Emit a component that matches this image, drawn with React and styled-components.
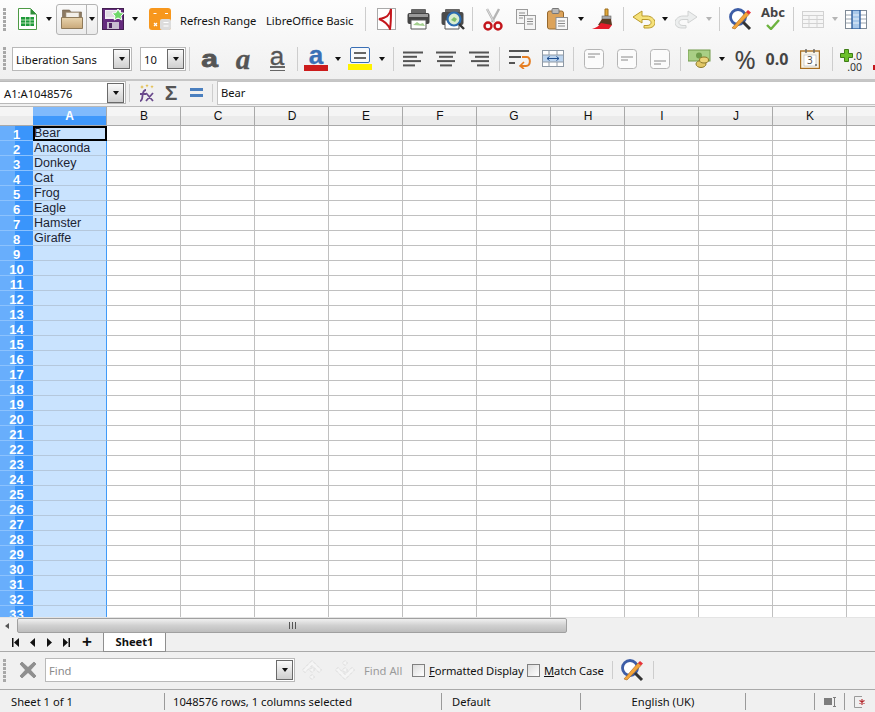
import React from 'react'
import styled, { createGlobalStyle } from 'styled-components'

const COLS = ['B', 'C', 'D', 'E', 'F', 'G', 'H', 'I', 'J', 'K']
const ANIMALS = ['Bear', 'Anaconda', 'Donkey', 'Cat', 'Frog', 'Eagle', 'Hamster', 'Giraffe']
const ROWS = Array.from({ length: 33 }, (_, i) => i + 1)

/* toolbar icons */
const NewSheetIcon = () => (
    <svg width="19" height="22" viewBox="0 0 19 22">
        <path d="M.5.5h12l6 6v15H.5z" fill="#fff" stroke="#4d9a45" />
        <path d="M12.500.5l6 6h-6z" fill="#2f8f3a" />
        <rect x="3" y="9" width="13" height="9" fill="#1f9a3b" />
        <path d="M3 12h13M3 15h13M7.500 9v9M12 9v9" stroke="#d9f2d0" strokeWidth=".8" />
    </svg>
)
const FolderIcon = () => (
    <svg width="22" height="20" viewBox="0 0 22 20">
        <defs>
            <linearGradient id="folderFront" x1="0" y1="0" x2="0" y2="1">
                <stop offset="0" stopColor="#e8d4ae" />
                <stop offset="1" stopColor="#c9a97a" />
            </linearGradient>
        </defs>
        <path d="M1.500 1h7l1.500 2h10.500v7h-19z" fill="#8d7a62" stroke="#6f5f4a" strokeWidth=".6" />
        <rect x="5" y="3.500" width="13" height="6" fill="#f3f0ea" stroke="#a99a80" strokeWidth=".6" />
        <path d="M.5 8.500h21v11H.5z" fill="url(#folderFront)" stroke="#8f7a59" />
    </svg>
)
const SaveIcon = () => (
    <svg width="23" height="22" viewBox="0 0 23 22">
        <rect x=".5" y=".5" width="21" height="21" fill="#652b7e" stroke="#43204f" />
        <rect x="3" y="2" width="16" height="9" fill="#f1eef2" />
        <path d="M4 4h13M4 6h13M4 8h13" stroke="#c4bacb" strokeWidth=".7" />
        <rect x="5" y="14" width="12" height="7" fill="#c9bcd0" />
        <rect x="7" y="15" width="3" height="5" fill="#4e2461" />
        <path d="M16 1l2 3.600 4 .6-3 2.800.8 4-3.800-2-3.800 2 .8-4-3-2.800 4-.6z" fill="#6fd86a" stroke="#fff" strokeWidth="1" />
    </svg>
)
const MacroIcon = () => (
    <svg width="22" height="22" viewBox="0 0 22 22">
        <rect width="22" height="22" rx="3" fill="#f7971d" />
        <rect x="11" y="11" width="11" height="11" rx="2" fill="#dcdcdc" />
        <path d="M4.500 5.500h3M16 5.500h3M14.500 14.500h5M14.500 18h5" stroke="#fff" strokeWidth="1.200" />
        <path d="M5 15l3 3M8 15l-3 3" stroke="#fff" strokeWidth="1.200" />
    </svg>
)
const PdfIcon = () => (
    <svg width="19" height="22" viewBox="0 0 19 22">
        <rect x=".5" y=".5" width="18" height="21" fill="#fff" stroke="#a9a9a9" />
        <path d="M14 1C13 7 10 10 2 11c5 2 9 5 11 10 1-6 1-13 1-20z" fill="none" stroke="#c4161c" strokeWidth="2" />
    </svg>
)
const PrintIcon = () => (
    <svg width="23" height="22" viewBox="0 0 23 22">
        <rect x="4" y="1" width="15" height="5" rx="1" fill="#666" />
        <rect x=".5" y="5" width="22" height="11" rx="2" fill="#444" />
        <rect x="2" y="6" width="19" height="3" fill="#9a9a9a" />
        <path d="M4 12h15v9H4z" fill="#fff" stroke="#555" />
        <path d="M6 17l4-3 3 2 3-1 2 3z" fill="#a3cf8e" />
    </svg>
)
const PreviewIcon = () => (
    <svg width="24" height="22" viewBox="0 0 24 22">
        <rect x="4" y="1" width="15" height="5" rx="1" fill="#666" />
        <rect x=".5" y="4" width="22" height="13" rx="2" fill="#4b4b4b" />
        <path d="M4 12h14v9H4z" fill="#fff" stroke="#555" />
        <circle cx="13" cy="11" r="6.500" fill="#d9ecd0" stroke="#2b6cb0" strokeWidth="2.200" />
        <path d="M10 12l3-3 3 2-2 3z" fill="#7fbf6a" />
        <path d="M18 16l5 5" stroke="#333" strokeWidth="2.400" />
    </svg>
)
const ScissorsIcon = () => (
    <svg width="20" height="23" viewBox="0 0 20 23">
        <path d="M4 1l7 13M16 1L9 14" stroke="#b4b4b4" strokeWidth="2.400" />
        <path d="M4 1l7 13" stroke="#e4e4e4" strokeWidth=".8" />
        <circle cx="5" cy="18" r="3.500" fill="none" stroke="#c3161c" strokeWidth="2.400" />
        <circle cx="15" cy="18" r="3.500" fill="none" stroke="#c3161c" strokeWidth="2.400" />
    </svg>
)
const CopyIcon = () => (
    <svg width="20" height="21" viewBox="0 0 20 21">
        <rect x=".5" y=".5" width="11" height="14" fill="#f4f4f4" stroke="#9b9b9b" />
        <rect x="8.500" y="6.500" width="11" height="14" fill="#f4f4f4" stroke="#9b9b9b" />
        <path d="M3 4h6M3 6.500h6M3 9h4M11 10h6M11 12.500h6M11 15h6" stroke="#8a8a8a" />
    </svg>
)
const PasteIcon = () => (
    <svg width="21" height="22" viewBox="0 0 21 22">
        <rect x=".5" y="3" width="16" height="18" rx="2" fill="#dca35a" stroke="#96682c" />
        <rect x="5" y=".5" width="7" height="5" rx="1" fill="#b9b9b9" stroke="#777" />
        <rect x="9" y="9.500" width="11.500" height="12" fill="#f7f7f7" stroke="#8f8f8f" />
        <path d="M11 13h7M11 15.500h7M11 18h7" stroke="#8a8a8a" />
    </svg>
)
const BrushIcon = () => (
    <svg width="24" height="22" viewBox="0 0 24 22">
        <path d="M13 1h3v7h-3z" fill="#e0a83c" stroke="#9c6d1b" />
        <rect x="10" y="8" width="9" height="3" fill="#aaa" stroke="#666" strokeWidth=".6" />
        <path d="M10 11h9l1 6H6z" fill="#5a3a22" />
        <path d="M0 21c4-1 7-3 9-6l11 2-3 4z" fill="#e51c2a" />
    </svg>
)
const UndoIcon = ({ off }) => (
    <svg width="23" height="19" viewBox="0 0 23 19" style={off ? { transform: 'scaleX(-1)' } : undefined}>
        <path
            d="M10 1L1 7l9 6V9.500h5c3 0 4 1.500 4 3s-1 3-4 3h-3V18h4c4 0 7-2 7-5.500S19 6 15 6h-5z"
            fill={off ? '#eceeee' : '#f6e27a'}
            stroke={off ? '#d0d2d2' : '#b9992b'}
        />
    </svg>
)
const FindIcon = () => (
    <svg width="24" height="24" viewBox="0 0 24 24">
        <circle cx="10" cy="10" r="7.500" fill="#fff" stroke="#3d5da6" strokeWidth="2.800" />
        <path d="M15 15l7 7" stroke="#333" strokeWidth="3" />
        <path d="M4 21L18 5l3 2.500L7 22z" fill="#f4a53a" stroke="#a8651a" strokeWidth=".6" />
        <path d="M18 5l2-2 3 2.500-2 2z" fill="#e6323a" />
    </svg>
)
const SpellIcon = () => (
    <svg width="14" height="11" viewBox="0 0 14 11">
        <path d="M1 6l4 4 8-9" fill="none" stroke="#6db33f" strokeWidth="2.400" />
    </svg>
)
const GridIcon = () => (
    <svg width="22" height="17" viewBox="0 0 22 17">
        <rect x=".5" y=".5" width="21" height="16" fill="#f6f6f6" stroke="#d2d2d2" />
        <path d="M1 4.500h20M1 8.500h20M1 12.500h20M7 4v13M15 4v13" stroke="#d2d2d2" />
    </svg>
)
const ColumnIcon = () => (
    <svg width="22" height="19" viewBox="0 0 22 19">
        <rect x=".5" y=".5" width="21" height="18" fill="#fff" stroke="#7f8a96" />
        <path d="M1 5h20M1 9h20M1 13h20" stroke="#9aa4ae" />
        <rect x="7" y="0" width="8" height="19" fill="#a9c8ea" stroke="#2f5f9f" strokeWidth="1.400" />
        <path d="M8 5h6M8 9h6M8 13h6" stroke="#e6f0fa" />
    </svg>
)
const AlignIcon = ({ mode }) => {
    const spans = {
        left: [[0, 20], [0, 14], [0, 18], [0, 12]],
        center: [[0, 20], [3, 17], [1, 19], [4, 16]],
        right: [[0, 20], [6, 20], [2, 20], [8, 20]],
    }[mode]
    return (
        <svg width="20" height="16" viewBox="0 0 20 16">
            {spans.map(([a, b], i) => (
                <path key={i} d={`M${a} ${1.5 + i * 4.3}H${b}`} stroke="#555" strokeWidth="2" />
            ))}
        </svg>
    )
}
const WrapIcon = () => (
    <svg width="24" height="20" viewBox="0 0 24 20">
        <path d="M1 2h20M1 8h12M1 14h6" stroke="#555" strokeWidth="2" />
        <path d="M14 8h5c4 0 4 9-1 9h-5" fill="none" stroke="#e67e22" strokeWidth="2" />
        <path d="M16 13l-4 4 4 3" fill="none" stroke="#e67e22" strokeWidth="1.600" />
    </svg>
)
const MergeIcon = () => (
    <svg width="22" height="17" viewBox="0 0 22 17">
        <rect x=".5" y=".5" width="21" height="16" fill="#fff" stroke="#8e99a5" />
        <rect x="1" y="5" width="20" height="7" fill="#bcd4ee" />
        <path d="M1 5h20M1 12h20M7 1v4M15 1v4M7 12v4M15 12v4" stroke="#8e99a5" />
        <path d="M5 8.500h12M5 8.500l2.500-2M5 8.500l2.500 2M17 8.500l-2.500-2M17 8.500l-2.500 2" stroke="#1f4e8f" fill="none" />
    </svg>
)
const VAlignIcon = ({ line }) => (
    <svg width="20" height="20" viewBox="0 0 20 20">
        <rect x=".5" y=".5" width="19" height="19" rx="3" fill="#fbfbfb" stroke="#b5b5b5" />
        <path d={`M4 ${line}h12M4 ${line + 3}h7`} stroke="#8a8a8a" />
    </svg>
)
const MoneyIcon = () => (
    <svg width="24" height="19" viewBox="0 0 24 19">
        <rect x="0" y="1" width="22" height="11" fill="#a9cf85" stroke="#739a4d" />
        <circle cx="11" cy="6.500" r="3" fill="#6e9c4a" />
        <ellipse cx="13" cy="15" rx="5" ry="3.500" fill="#e2c766" stroke="#8d7a2a" />
        <ellipse cx="16" cy="11" rx="4.500" ry="3" fill="#ecd47a" stroke="#8d7a2a" />
    </svg>
)
const DateIcon = () => (
    <svg width="20" height="20" viewBox="0 0 20 20">
        <rect x=".5" y="2" width="19" height="17.500" fill="#f7f3e8" stroke="#a96f22" strokeWidth="1.400" />
        <rect x="4" y="6" width="12" height="11" fill="#fff" stroke="#b5b5b5" strokeWidth=".6" />
        <path d="M6 0v4M14 0v4" stroke="#666" strokeWidth="1.400" />
        <rect x="15" y="15" width="2" height="2" fill="#888" />
    </svg>
)
const PlusIcon = () => (
    <svg width="13" height="13" viewBox="0 0 13 13">
        <path d="M4.500.5h4v4h4v4h-4v4h-4v-4h-4v-4h4z" fill="#6cc02a" stroke="#3f7d17" />
    </svg>
)
const FxIcon = () => (
    <svg width="18" height="18" viewBox="0 0 18 18">
        <path d="M5 1l.6 1.500L7 3l-1.400.6L5 5l-.6-1.400L3 3l1.400-.5zM10 0l.5 1.200 1.200.5-1.200.5-.5 1.200-.5-1.200-1.200-.5 1.200-.5zM15 1l.5 1.200 1.200.5-1.200.5-.5 1.200-.5-1.200-1.200-.5 1.200-.5z" fill="#e2b93b" />
        <path d="M3 17c3 0 2-5 3-8s2-3 3-3M3 10h6M9 9l7 8M16 9l-7 8" fill="none" stroke="#6a4a8c" strokeWidth="1.800" />
    </svg>
)
const EqualsIcon = () => (
    <svg width="13" height="9" viewBox="0 0 13 9">
        <rect width="13" height="3" fill="#4a7fbf" />
        <rect y="6" width="13" height="3" fill="#4a7fbf" />
    </svg>
)
const NavIcon = ({ dir }) => (
    <svg width="7" height="9" viewBox="0 0 7 9">
        {dir === 'first' && <path d="M0 0h1.500v9H0zM7 0v9L2 4.500z" fill="#111" />}
        {dir === 'prev' && <path d="M6 0v9L1 4.500z" fill="#111" />}
        {dir === 'next' && <path d="M1 0v9l5-4.500z" fill="#111" />}
        {dir === 'last' && <path d="M0 0v9l5-4.500zM5.500 0H7v9H5.500z" fill="#111" />}
    </svg>
)
const CloseIcon = () => (
    <svg width="18" height="18" viewBox="0 0 18 18">
        <path d="M3 1l6 5.500L15 1l2 2-5.500 6L17 15l-2 2-6-5.500L3 17l-2-2 5.500-6L1 3z" fill="#8f8f8f" stroke="#777" strokeWidth=".6" />
    </svg>
)
const FindStepIcon = ({ up }) => (
    <svg width="20" height="20" viewBox="0 0 20 20" style={up ? undefined : { transform: 'scaleY(-1)' }}>
        <path
            d="M10 .5L19.500 10 17 12.500l-7-7-7 7L.5 10zM10 7.500l2.500 2.500-2.500 2.500L7.500 10zM10 14.500l2.500 2.500-2.500 2.500L7.500 17z"
            fill="#f5f5f5"
            stroke="#cfcfcf"
            strokeDasharray="1 1"
        />
    </svg>
)
const SelectionModeIcon = () => (
    <svg width="12" height="10" viewBox="0 0 12 10">
        <rect y="1" width="8" height="7" fill="#7d7d7d" />
        <path d="M9 .5h3M9 9.500h3M10.500 1v8" stroke="#7d7d7d" />
    </svg>
)
const ModifiedIcon = () => (
    <svg width="12" height="12" viewBox="0 0 12 12">
        <path d="M8 .5H.5v11H8" fill="none" stroke="#9a9a9a" />
        <path d="M8 3v6M5.500 4.500l5 3M10.500 4.500l-5 3" stroke="#b3262a" strokeWidth="1.100" />
    </svg>
)

function ComboArrow() {
    return <ComboButton><Caret /></ComboButton>
}

function App() {
    return (
        <Page>
            <GlobalStyle />
            <TopBar $h={38} $top="#fdfdfd" $bottom="#f7f7f7">
                <Grip />
                <Slot $w={36}><NewSheetIcon /></Slot>
                <Slot $w={8}><Caret /></Slot>
                <OpenButton>
                    <OpenMain><FolderIcon /></OpenMain>
                    <OpenDrop><Caret /></OpenDrop>
                </OpenButton>
                <Slot $w={30}><SaveIcon /></Slot>
                <Slot $w={14}><Caret /></Slot>
                <Slot $w={36}><MacroIcon /></Slot>
                <TextButton $w={86}>Refresh Range</TextButton>
                <TextButton $w={95}>LibreOffice Basic</TextButton>
                <Slot $w={12}><Sep /></Slot>
                <Slot $w={30}><PdfIcon /></Slot>
                <Slot $w={34}><PrintIcon /></Slot>
                <Slot $w={36}><PreviewIcon /></Slot>
                <Slot $w={2}><Sep /></Slot>
                <Slot $w={40}><ScissorsIcon /></Slot>
                <Slot $w={26}><CopyIcon /></Slot>
                <Slot $w={37}><PasteIcon /></Slot>
                <Slot $w={9}><Caret /></Slot>
                <Slot $w={38}><BrushIcon /></Slot>
                <Slot $w={1}><Sep /></Slot>
                <Slot $w={38}><UndoIcon /></Slot>
                <Slot $w={6}><Caret /></Slot>
                <Slot $w={36}><UndoIcon off /></Slot>
                <Slot $w={10}><Caret $off /></Slot>
                <Slot $w={10}><Sep /></Slot>
                <Slot $w={32}><FindIcon /></Slot>
                <Slot $w={34}>
                    <SpellStack>
                        <AbcText>Abc</AbcText>
                        <SpellIcon />
                    </SpellStack>
                </Slot>
                <Slot $w={6}><Sep /></Slot>
                <Slot $w={34}><GridIcon /></Slot>
                <Slot $w={10}><Caret $off /></Slot>
                <Slot $w={32}><ColumnIcon /></Slot>
            </TopBar>

            <TopBar $h={41} $top="#f7f7f7" $bottom="#f0f0f0">
                <Grip />
                <Slot $w={3} />
                <Combo $w={120}>
                    <ComboValue>Liberation Sans</ComboValue>
                    <ComboArrow />
                </Combo>
                <Slot $w={8} />
                <Combo $w={46}>
                    <ComboValue>10</ComboValue>
                    <ComboArrow />
                </Combo>
                <Slot $w={6}><Sep /></Slot>
                <Slot $w={36}><FontGlyph $bold>a</FontGlyph></Slot>
                <Slot $w={30}><FontGlyph $italic>a</FontGlyph></Slot>
                <Slot $w={38}>
                    <ColorStack>
                        <FontGlyph>a</FontGlyph>
                        <DoubleRule />
                    </ColorStack>
                </Slot>
                <Slot $w={2}><Sep /></Slot>
                <Slot $w={36}>
                    <ColorStack>
                        <FontGlyph $blue>a</FontGlyph>
                        <ColorBar $color="#cc1c1c" />
                    </ColorStack>
                </Slot>
                <Slot $w={8}><Caret /></Slot>
                <Slot $w={36}>
                    <ColorStack>
                        <HighlightBox />
                        <ColorBar $color="#fff200" />
                    </ColorStack>
                </Slot>
                <Slot $w={8}><Caret /></Slot>
                <Slot $w={14}><Sep /></Slot>
                <Slot $w={26}><AlignIcon mode="left" /></Slot>
                <Slot $w={40}><AlignIcon mode="center" /></Slot>
                <Slot $w={26}><AlignIcon mode="right" /></Slot>
                <Slot $w={14}><Sep /></Slot>
                <Slot $w={28}><WrapIcon /></Slot>
                <Slot $w={38}><MergeIcon /></Slot>
                <Slot $w={2}><Sep /></Slot>
                <Slot $w={40}><VAlignIcon line={5} /></Slot>
                <Slot $w={26}><VAlignIcon line={8} /></Slot>
                <Slot $w={40}><VAlignIcon line={12} /></Slot>
                <Slot $w={1}><Sep /></Slot>
                <Slot $w={38}><MoneyIcon /></Slot>
                <Slot $w={6}><Caret /></Slot>
                <Slot $w={40}><Percent>%</Percent></Slot>
                <Slot $w={24}><Decimal>0.0</Decimal></Slot>
                <Slot $w={42}>
                    <DateBox>
                        <DateIcon />
                        <DateDigit>3</DateDigit>
                    </DateBox>
                </Slot>
                <Slot $w={2}><Sep /></Slot>
                <DecimalAdd>
                    <PlusIcon />
                    <DecimalDigits>
                        <span>.0</span>
                        <span>.00</span>
                    </DecimalDigits>
                </DecimalAdd>
                <NextIconEdge />
            </TopBar>

            <FormulaBar>
                <NameBox>
                    <ComboValue>A1:A1048576</ComboValue>
                    <ComboArrow />
                </NameBox>
                <Slot $w={7}><Sep $short /></Slot>
                <Slot $w={26}><FxIcon /></Slot>
                <Slot $w={24}><Sigma>Σ</Sigma></Slot>
                <Slot $w={26}><EqualsIcon /></Slot>
                <Slot $w={6}><Sep $short /></Slot>
                <FormulaInput>Bear</FormulaInput>
            </FormulaBar>

            <Sheet>
                <HeaderRow>
                    <Corner />
                    <ColHead $active>A</ColHead>
                    {COLS.map(c => <ColHead key={c}>{c}</ColHead>)}
                    <ColHead $rest />
                </HeaderRow>
                {ROWS.map(n => (
                    <Row key={n}>
                        <RowHead>{n}</RowHead>
                        <CellA $cursor={n === 1}>{ANIMALS[n - 1]}</CellA>
                        {COLS.map(c => <Cell key={c} />)}
                        <Cell $rest />
                    </Row>
                ))}
            </Sheet>

            <ScrollBar>
                <ScrollLeft><ScrollArrow /></ScrollLeft>
                <ScrollThumb><ThumbGrip /></ScrollThumb>
            </ScrollBar>

            <TabBar>
                <TabNav>
                    <NavIcon dir="first" />
                    <NavIcon dir="prev" />
                    <NavIcon dir="next" />
                    <NavIcon dir="last" />
                </TabNav>
                <AddSheet>+</AddSheet>
                <SheetTab>Sheet1</SheetTab>
            </TabBar>

            <FindBar>
                <Grip />
                <Slot $w={38}><CloseIcon /></Slot>
                <FindCombo>
                    <FindPlaceholder>Find</FindPlaceholder>
                    <ComboArrow />
                </FindCombo>
                <Slot $w={33}><FindStepIcon up /></Slot>
                <Slot $w={33}><FindStepIcon /></Slot>
                <FindAll>Find All</FindAll>
                <CheckBox />
                <CheckLabel $w={102}><u>F</u>ormatted Display</CheckLabel>
                <CheckBox />
                <CheckLabel $w={68}><u>M</u>atch Case</CheckLabel>
                <Slot $w={8}><Sep $short /></Slot>
                <Slot $w={32}><FindIcon /></Slot>
                <Slot $w={10}><Sep $short /></Slot>
            </FindBar>

            <StatusBar>
                <StatusCell $w={165}>Sheet 1 of 1</StatusCell>
                <StatusCell $w={277} $pad={8}>1048576 rows, 1 columns selected</StatusCell>
                <StatusCell $w={139} $pad={10}>Default</StatusCell>
                <StatusCell $w={165} $center>English (UK)</StatusCell>
                <StatusCell $w={69} />
                <StatusCell $w={30} $center><SelectionModeIcon /></StatusCell>
                <StatusCell $w={30} $center $last><ModifiedIcon /></StatusCell>
            </StatusBar>
        </Page>
    )
}

export default App

const UI_FONT = `"Noto Sans", "Open Sans", sans-serif`
const CELL_FONT = `"Liberation Sans", Arial, sans-serif`

const GlobalStyle = createGlobalStyle`
    html, body {
        margin: 0;
        padding: 0;
        background: #f0f0f0;
    }
    * {
        box-sizing: border-box;
    }
`
const Page = styled.div`
    width: 875px;
    height: 712px;
    display: flex;
    flex-direction: column;
    overflow: hidden;
    background: #f0f0f0;
    font-family: ${UI_FONT};
    font-size: 11.2px;
    color: #111;
`
const TopBar = styled.div`
    position: relative;
    height: ${p => p.$h}px;
    flex: none;
    display: flex;
    align-items: center;
    white-space: nowrap;
    overflow: hidden;
    background: linear-gradient(${p => p.$top}, ${p => p.$bottom});
`
const Grip = styled.div`
    width: 9px;
    height: 23px;
    flex: none;
    border-left: 3px solid transparent;
    background:
        repeating-linear-gradient(#a8a8a8 0 3px, transparent 3px 4px) 0 0 / 3px 100% no-repeat;
`
const Slot = styled.div`
    width: ${p => p.$w}px;
    flex: none;
    display: flex;
    align-items: center;
    justify-content: center;
`
const Caret = styled.span`
    width: 0;
    height: 0;
    flex: none;
    border-left: 3.5px solid transparent;
    border-right: 3.5px solid transparent;
    border-top: 4px solid ${p => (p.$off ? '#b5b5b5' : '#111')};
`
const Sep = styled.div`
    width: 1px;
    height: ${p => (p.$short ? 18 : 24)}px;
    flex: none;
    background: #cdcdcd;
`
const OpenButton = styled.div`
    width: 42px;
    height: 31px;
    flex: none;
    margin-left: 3px;
    display: flex;
    border: 1px solid #b4b4b4;
    border-radius: 3px;
    background: linear-gradient(#fafafa, #ececec);
`
const OpenMain = styled.div`
    flex: 1;
    display: flex;
    align-items: center;
    justify-content: center;
`
const OpenDrop = styled.div`
    width: 11px;
    flex: none;
    display: flex;
    align-items: center;
    justify-content: center;
    border-left: 1px solid #b4b4b4;
`
const TextButton = styled.div`
    width: ${p => p.$w}px;
    flex: none;
    padding: 2px 0 0 2px;
`
const SpellStack = styled.div`
    display: flex;
    flex-direction: column;
    align-items: center;
    margin-top: -3px;
`
const AbcText = styled.div`
    font-weight: 700;
    font-size: 13px;
    line-height: 13px;
    color: #444;
`
const Combo = styled.div`
    width: ${p => p.$w}px;
    height: 24px;
    flex: none;
    display: flex;
    align-items: center;
    justify-content: space-between;
    padding: 0 1px 0 3px;
    background: #fff;
    border: 1px solid #b9b9b9;
`
const ComboValue = styled.span`
    padding-top: 1px;
    white-space: nowrap;
`
const ComboButton = styled.div`
    width: 17px;
    height: 20px;
    flex: none;
    display: flex;
    align-items: center;
    justify-content: center;
    border: 1px solid #6a6a6a;
    background: linear-gradient(#fafafa, #cfcfcf);
`
const FontGlyph = styled.span`
    display: inline-block;
    font-family: ${p => (p.$italic ? `"Liberation Serif", serif` : CELL_FONT)};
    font-size: ${p => (p.$bold ? 24 : p.$italic ? 29 : 26)}px;
    line-height: ${p => (p.$bold || p.$italic ? 24 : 18)}px;
    font-weight: ${p => (p.$bold || p.$blue || p.$italic ? 700 : 400)};
    font-style: ${p => (p.$italic ? 'italic' : 'normal')};
    color: ${p => (p.$blue ? '#3a6fb5' : '#555')};
    transform: ${p => (p.$bold ? 'scaleX(1.25)' : 'none')};
    -webkit-text-stroke: ${p => (p.$bold ? '0.8px #555' : '0.3px currentColor')};
`
const ColorStack = styled.div`
    display: flex;
    flex-direction: column;
    align-items: center;
    gap: 1px;
`
const DoubleRule = styled.div`
    width: 15px;
    height: 5px;
    border-top: 2px solid #666;
    border-bottom: 1px solid #666;
`
const ColorBar = styled.div`
    width: 24px;
    height: 6px;
    background: ${p => p.$color};
`
const HighlightBox = styled.div`
    width: 20px;
    height: 16px;
    border: 1px solid #3a6fb5;
    border-radius: 2px;
    background:
        linear-gradient(#666, #666) 3px 4px / 12px 2px no-repeat,
        linear-gradient(#666, #666) 3px 9px / 12px 2px no-repeat,
        #f7f9fb;
`
const Percent = styled.span`
    font-size: 26px;
    line-height: 26px;
    color: #444;
`
const Decimal = styled.span`
    font-size: 16px;
    font-weight: 700;
    color: #444;
`
const DateBox = styled.div`
    position: relative;
    display: flex;
`
const DateDigit = styled.span`
    position: absolute;
    left: 7px;
    top: 5px;
    font-size: 10px;
    line-height: 13px;
    color: #555;
`
const DecimalAdd = styled.div`
    width: 28px;
    flex: none;
    margin: 4px 0 0 7px;
    display: flex;
`
const DecimalDigits = styled.div`
    display: flex;
    flex-direction: column;
    align-items: flex-end;
    width: 15px;
    margin: 2px 0 0 -6px;
    font-size: 10.5px;
    line-height: 11px;
    color: #333;
`
const NextIconEdge = styled.div`
    position: absolute;
    right: 0;
    top: 27px;
    width: 2px;
    height: 5px;
    background: #c3161c;
`
const FormulaBar = styled.div`
    height: 27px;
    flex: none;
    display: flex;
    align-items: center;
    padding-bottom: 2px;
    background: #f0f0f0;
    border-top: 2px solid #c6c6c6;
`
const NameBox = styled(Combo)`
    width: 126px;
    border-left: none;
    height: 23px;
    padding-left: 4px;
`
const Sigma = styled.span`
    font-family: ${CELL_FONT};
    font-weight: 700;
    font-size: 21px;
    line-height: 20px;
    color: #555;
`
const FormulaInput = styled.div`
    flex: 1;
    height: 24px;
    margin-left: 2px;
    line-height: 22px;
    padding-left: 3px;
    background: #fff;
    border: 1px solid #c4c4c4;
    border-right: none;
`
const Sheet = styled.div`
    height: 511px;
    flex: none;
    overflow: hidden;
    background: #fff;
    font-family: ${CELL_FONT};
`
const HeaderRow = styled.div`
    height: 20px;
    display: flex;
    border-top: 1px solid #b9b9b9;
    background: linear-gradient(#f5f5f5 50%, #ebebeb 50%);
    border-bottom: 1px solid #a9a9a9;
`
const Corner = styled.div`
    width: 33px;
    flex: none;
`
const ColHead = styled.div`
    width: ${p => (p.$rest ? 'auto' : '74px')};
    flex: ${p => (p.$rest ? 1 : 'none')};
    padding-left: ${p => (p.$active ? 0 : 1)}px;
    text-align: center;
    font-size: 12px;
    line-height: 19px;
    font-weight: ${p => (p.$active ? 700 : 400)};
    color: ${p => (p.$active ? '#fff' : '#111')};
    border-right: ${p => (p.$rest ? 'none' : '1px solid #a9a9a9')};
    background: ${p => (p.$active ? 'linear-gradient(#80bafc 50%, #3f98fb 50%)' : 'none')};
`
const Row = styled.div`
    height: 15px;
    display: flex;
`
const RowHead = styled.div`
    width: 33px;
    flex: none;
    text-align: center;
    color: #fff;
    font-weight: 700;
    font-size: 13px;
    line-height: 17px;
    overflow: hidden;
    background: linear-gradient(90deg, #68aefc 15px, #3a95fb 15px);
    border-bottom: 1px solid #8cc2fd;
`
const CellA = styled.div`
    width: 74px;
    flex: none;
    padding-left: 1px;
    font-size: 12.5px;
    line-height: 14px;
    color: #1c2333;
    background: #c9e3fe;
    border-right: 1px solid #3f9af8;
    border-bottom: 1px solid #b5c8dc;
    outline: ${p => (p.$cursor ? '2px solid #000' : 'none')};
    outline-offset: -2px;
`
const Cell = styled.div`
    width: ${p => (p.$rest ? 'auto' : '74px')};
    flex: ${p => (p.$rest ? 1 : 'none')};
    border-right: ${p => (p.$rest ? 'none' : '1px solid #c0c0c0')};
    border-bottom: 1px solid #c0c0c0;
`
const ScrollBar = styled.div`
    height: 16px;
    flex: none;
    display: flex;
    background: #f0f0f0;
    border-top: 1px solid #e4e4e4;
`
const ScrollLeft = styled.div`
    width: 17px;
    flex: none;
    display: flex;
    align-items: center;
    justify-content: center;
`
const ScrollArrow = styled.span`
    width: 0;
    height: 0;
    margin-right: 3px;
    border-top: 3.5px solid transparent;
    border-bottom: 3.5px solid transparent;
    border-right: 4px solid #555;
`
const ScrollThumb = styled.div`
    width: 550px;
    flex: none;
    display: flex;
    align-items: center;
    justify-content: center;
    border: 1px solid #a0a0a0;
    border-radius: 2px;
    background: linear-gradient(#f0f0f0, #d0d0d0 50%, #bdbdbd);
`
const ThumbGrip = styled.div`
    width: 7px;
    height: 7px;
    background: repeating-linear-gradient(90deg, #555 0 1px, transparent 1px 3px);
`
const TabBar = styled.div`
    height: 19px;
    flex: none;
    display: flex;
    align-items: flex-start;
    padding-left: 12px;
    background: #f0f0f0;
    border-bottom: 1px solid #a9a9a9;
`
const TabNav = styled.div`
    width: 58px;
    height: 18px;
    flex: none;
    display: flex;
    align-items: center;
    gap: 10px;
`
const AddSheet = styled.div`
    width: 33px;
    flex: none;
    padding-left: 12px;
    font-family: ${CELL_FONT};
    font-size: 17px;
    font-weight: 700;
    line-height: 17px;
`
const SheetTab = styled.div`
    width: 63px;
    height: 19px;
    flex: none;
    text-align: center;
    font-weight: 700;
    line-height: 18px;
    background: #fff;
    border: 1px solid #8f8f8f;
    border-top: none;
`
const FindBar = styled.div`
    height: 38px;
    flex: none;
    display: flex;
    align-items: center;
    padding-bottom: 1px;
    background: #f0f0f0;
    border-bottom: 1px solid #a9a9a9;
`
const FindCombo = styled(Combo)`
    width: 250px;
    margin-left: -2px;
`
const FindPlaceholder = styled.span`
    color: #8a8a8a;
`
const FindAll = styled.div`
    width: 51px;
    flex: none;
    color: #9a9a9a;
    padding-left: 3px;
`
const CheckBox = styled.div`
    width: 13px;
    height: 13px;
    flex: none;
    border: 1px solid #808080;
    background: linear-gradient(135deg, #dcdcdc, #fff);
`
const CheckLabel = styled.div`
    width: ${p => p.$w}px;
    flex: none;
    padding-left: 4px;
    letter-spacing: -0.1px;
    white-space: nowrap;
`
const StatusBar = styled.div`
    flex: 1;
    display: flex;
    align-items: center;
    background: #f0f0f0;
`
const StatusCell = styled.div`
    width: ${p => p.$w}px;
    height: 17px;
    flex: none;
    display: flex;
    align-items: center;
    justify-content: ${p => (p.$center ? 'center' : 'flex-start')};
    padding-top: 1px;
    padding-left: ${p => (p.$center ? 0 : p.$pad || 11)}px;
    white-space: nowrap;
    border-right: ${p => (p.$last ? 'none' : '1px solid #9a9a9a')};
`
